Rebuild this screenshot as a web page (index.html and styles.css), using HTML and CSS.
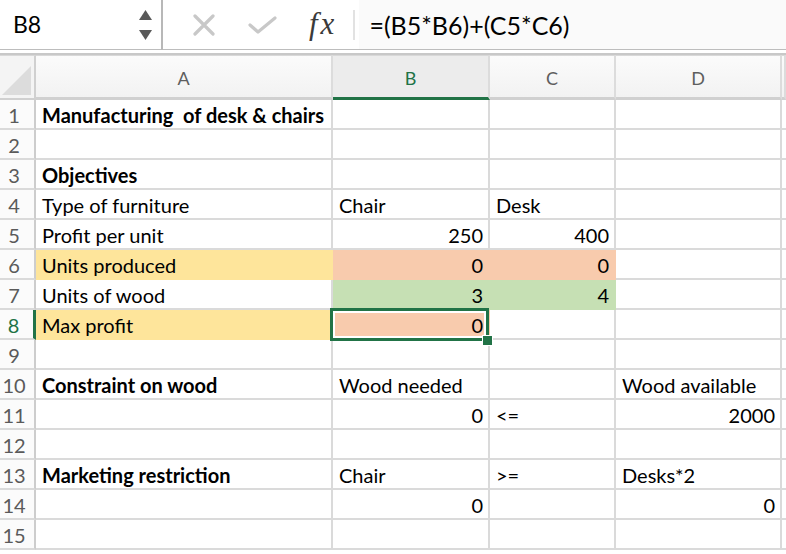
FILE: index.html
```html
<!DOCTYPE html>
<html>
<head>
<meta charset="utf-8">
<link rel="stylesheet" href="styles.css">
</head>
<body>
<div class="app">
  <div class="fbar">
    <div class="namebox">
      <span class="name">B8</span>
      <div class="spin">
        <svg width="13" height="10" viewBox="0 0 13 10"><polygon points="6.5,0 13,10 0,10" fill="#595959"/></svg>
        <svg width="13" height="10" viewBox="0 0 13 10"><polygon points="0,0 13,0 6.5,10" fill="#595959"/></svg>
      </div>
    </div>
    <svg class="ic-x" width="22" height="22" viewBox="0 0 22 22"><path d="M2 2 L20 20 M20 2 L2 20" stroke="#c8c8c8" stroke-width="3.2" stroke-linecap="round" fill="none"/></svg>
    <svg class="ic-check" width="29" height="18" viewBox="0 0 29 18"><path d="M2 9 L10 16 L27 2" stroke="#c8c8c8" stroke-width="3.2" stroke-linecap="round" stroke-linejoin="round" fill="none"/></svg>
    <span class="fx">fx</span>
    <div class="sep"></div>
    <div class="formula">=(B5*B6)+(C5*C6)</div>
  </div>
  <div class="rule"></div>
  <div class="sheet">
    <div class="row head">
      <div class="corner"><svg width="29" height="29" viewBox="0 0 29 29"><polygon points="29,0 29,29 0,29" fill="#dcdcdc"/></svg></div>
      <div class="ch">A</div>
      <div class="ch active">B</div>
      <div class="ch">C</div>
      <div class="ch">D</div>
      <div class="ch"></div>
    </div>
    <div class="row">
      <div class="rh">1</div>
      <div class="c b pre">Manufacturing  of desk &amp; chairs</div>
      <div class="c"></div><div class="c"></div><div class="c"></div><div class="c"></div>
    </div>
    <div class="row">
      <div class="rh">2</div>
      <div class="c"></div><div class="c"></div><div class="c"></div><div class="c"></div><div class="c"></div>
    </div>
    <div class="row">
      <div class="rh">3</div>
      <div class="c b">Objectives</div>
      <div class="c"></div><div class="c"></div><div class="c"></div><div class="c"></div>
    </div>
    <div class="row">
      <div class="rh">4</div>
      <div class="c">Type of furniture</div>
      <div class="c">Chair</div>
      <div class="c">Desk</div>
      <div class="c"></div><div class="c"></div>
    </div>
    <div class="row">
      <div class="rh">5</div>
      <div class="c">Profit per unit</div>
      <div class="c r">250</div>
      <div class="c r">400</div>
      <div class="c"></div><div class="c"></div>
    </div>
    <div class="row">
      <div class="rh">6</div>
      <div class="c yellow">Units produced</div>
      <div class="c r salmon">0</div>
      <div class="c r salmon">0</div>
      <div class="c"></div><div class="c"></div>
    </div>
    <div class="row">
      <div class="rh">7</div>
      <div class="c">Units of wood</div>
      <div class="c r green">3</div>
      <div class="c r green">4</div>
      <div class="c"></div><div class="c"></div>
    </div>
    <div class="row">
      <div class="rh active">8</div>
      <div class="c yellow">Max profit</div>
      <div class="c r salmon selected">0<div class="selbox"></div><div class="handle"></div></div>
      <div class="c"></div><div class="c"></div><div class="c"></div>
    </div>
    <div class="row">
      <div class="rh">9</div>
      <div class="c"></div><div class="c"></div><div class="c"></div><div class="c"></div><div class="c"></div>
    </div>
    <div class="row">
      <div class="rh">10</div>
      <div class="c b">Constraint on wood</div>
      <div class="c">Wood needed</div>
      <div class="c"></div>
      <div class="c">Wood available</div>
      <div class="c"></div>
    </div>
    <div class="row">
      <div class="rh">11</div>
      <div class="c"></div>
      <div class="c r">0</div>
      <div class="c">&lt;=</div>
      <div class="c r">2000</div>
      <div class="c"></div>
    </div>
    <div class="row">
      <div class="rh">12</div>
      <div class="c"></div><div class="c"></div><div class="c"></div><div class="c"></div><div class="c"></div>
    </div>
    <div class="row">
      <div class="rh">13</div>
      <div class="c b">Marketing restriction</div>
      <div class="c">Chair</div>
      <div class="c">&gt;=</div>
      <div class="c">Desks*2</div>
      <div class="c"></div>
    </div>
    <div class="row">
      <div class="rh">14</div>
      <div class="c"></div>
      <div class="c r">0</div>
      <div class="c"></div>
      <div class="c r">0</div>
      <div class="c"></div>
    </div>
    <div class="row">
      <div class="rh">15</div>
      <div class="c"></div><div class="c"></div><div class="c"></div><div class="c"></div><div class="c"></div>
    </div>
  </div>
</div>
</body>
</html>
```

FILE: styles.css
```css
* { box-sizing: border-box; }
html, body { margin: 0; padding: 0; background: #fff; }
body { width: 786px; height: 554px; overflow: hidden; font-family: "Lato", "Open Sans", sans-serif; color: #000; }

.fbar {
  height: 50px;
  display: flex;
  align-items: center;
  border-bottom: 1px solid #bdbdbd;
}
.namebox {
  width: 163px;
  height: 50px;
  display: flex;
  align-items: center;
  justify-content: space-between;
  padding-left: 13px;
  padding-right: 9px;
  border-right: 2px solid #b8b8b8;
}
.name { font-size: 23px; line-height: 27px; }
.spin { display: flex; flex-direction: column; gap: 10px; padding-top: 1px; }
.spin svg { display: block; }
.ic-x { margin-left: 30px; display: block; }
.ic-check { margin-left: 33px; display: block; }
.fx {
  margin-left: 32px;
  font-family: "Liberation Serif", "DejaVu Serif", serif;
  font-style: italic;
  font-size: 31px;
  letter-spacing: 3px;
  color: #3a3a3a;
  line-height: 30px;
  padding-bottom: 2px;
}
.sep { margin-left: 16px; width: 2px; height: 30px; background: #e2e2e2; }
.formula {
  flex: 1;
  align-self: stretch;
  margin-left: 4px;
  padding-left: 10px;
  display: flex;
  align-items: center;
  font-size: 25px;
  background: #fafafa;
}
.rule {
  height: 5px;
  border-top: 1px solid #fff;
  border-bottom: 2px solid #c8c8c8;
  background: #fff;
}

.row {
  display: grid;
  grid-template-columns: 36px 297px 157px 126px 166px 1fr;
  height: 30px;
}
.row.head { height: 45px; }

.corner {
  border-right: 2px solid #d0d0d0;
  border-bottom: 2px solid #d0d0d0;
  border-top: 1px solid #d8d8d8;
  background: #f4f4f4;
  display: flex;
  align-items: flex-end;
  justify-content: flex-end;
  padding: 0 3px 3px 0;
}
.corner svg { display: block; }
.ch {
  border-top: 1px solid #d8d8d8;
  border-right: 2px solid #dcdcdc;
  border-bottom: 3px solid #d0d0d0;
  background: linear-gradient(#fbfbfb, #f2f2f2);
  text-align: center;
  font-size: 18px;
  line-height: 38px;
  padding-top: 3px;
  color: #5e5e5e;
}
.ch.active {
  background: #ececec;
  color: #217346;
  border-bottom-color: #217346;
}

.rh {
  background: #fbfbfb;
  border-right: 2px solid #cdcdcd;
  border-bottom: 2px solid #dadada;
  text-align: center;
  padding-right: 6px;
  font-size: 20px;
  line-height: 25px;
  padding-top: 3px;
  color: #5a5a5a;
}
.rh.active { color: #217346; border-right-color: #217346; border-right-width: 3px; }

.c {
  border-right: 2px solid #dadada;
  border-bottom: 2px solid #dadada;
  font-size: 20px;
  line-height: 25px;
  padding: 3px 5px 0 6px;
  white-space: nowrap;
}
.c.b { font-weight: bold; }
.c.pre { white-space: pre; }
.c.r { text-align: right; }
.yellow { background: #fee59b; border-color: #fee59b; }
.salmon { background: #f8cbad; border-color: #f8cbad; }
.green { background: #c6e0b4; border-color: #c6e0b4; }

.selected { position: relative; }
.selbox {
  position: absolute;
  left: -3px;
  top: -2px;
  right: -1px;
  bottom: -3px;
  border: 3px solid #217346;
  box-shadow: inset 0 0 0 2px #fff;
  z-index: 2;
}
.handle {
  position: absolute;
  left: 149px;
  top: 25px;
  width: 11px;
  height: 11px;
  background: #217346;
  border: 1px solid #fff;
  z-index: 3;
}
```
